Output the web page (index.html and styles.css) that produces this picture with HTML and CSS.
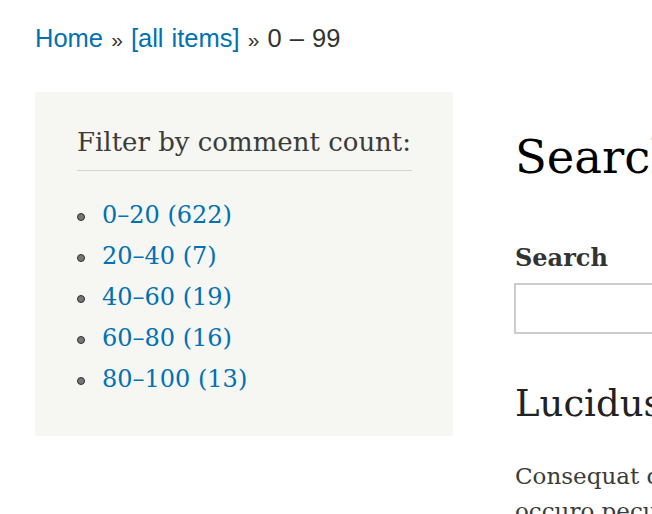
FILE: index.html
```html
<!DOCTYPE html>
<html lang="en">
<head>
<meta charset="utf-8">
<title>Search</title>
<link rel="stylesheet" href="styles.css">
</head>
<body>
<div class="page">
  <nav class="breadcrumb">
    <a href="#">Home</a> <span class="sep">»</span> <a href="#">[all items]</a> <span class="sep">»</span> 0 – 99
  </nav>
  <div class="layout">
    <aside class="sidebar">
      <h2 class="block-title">Filter by comment count:</h2>
      <ul class="facet-list">
        <li><a href="#">0–20 (622)</a></li>
        <li><a href="#">20–40 (7)</a></li>
        <li><a href="#">40–60 (19)</a></li>
        <li><a href="#">60–80 (16)</a></li>
        <li><a href="#">80–100 (13)</a></li>
      </ul>
    </aside>
    <main class="content">
      <h1 class="page-title">Search</h1>
      <form class="search-form">
        <label class="search-label" for="q">Search</label>
        <input class="search-input" id="q" type="text">
      </form>
      <h2 class="result-title">Lucidus Paratus Refoveo</h2>
      <p class="result-text">Consequat dolor luctus occuro pecus tamen vel virtus praesent ullamcorper.</p>
    </main>
  </div>
</div>
</body>
</html>
```

FILE: styles.css
```css
html, body {
  margin: 0;
  padding: 0;
  overflow: hidden;
  background: #ffffff;
}

.page {
  padding-left: 35px;
  width: 1000px;
}

.breadcrumb {
  padding-top: 23px;
  font-family: "Liberation Sans", Arial, sans-serif;
  font-size: 25.5px;
  line-height: 30px;
  word-spacing: 1px;
  color: #333333;
  white-space: nowrap;
}

.breadcrumb a {
  color: #0071b3;
  text-decoration: none;
}

.breadcrumb .sep {
  font-size: 21px;
}

.layout {
  display: flex;
  align-items: flex-start;
  gap: 62px;
  margin-top: 37px;
}

.sidebar {
  width: 418px;
  flex: none;
  box-sizing: border-box;
  background: #f6f6f2;
  padding: 35px 41px 36px 42px;
  font-family: "DejaVu Serif", Georgia, serif;
}

.block-title {
  margin: 0;
  font-size: 26px;
  font-weight: normal;
  line-height: 30px;
  color: #3b3b3b;
  padding-bottom: 13px;
  border-bottom: 1px solid #d3d3d0;
  white-space: nowrap;
}

.facet-list {
  list-style: none;
  margin: 24px 0 0 0;
  padding: 0;
}

.facet-list li {
  display: flex;
  align-items: center;
  font-size: 24px;
  line-height: 41px;
}

.facet-list li::before {
  content: "";
  width: 6px;
  height: 6px;
  border: 1px solid #2e2e2e;
  border-radius: 50%;
  background: #777777;
  margin-right: 17px;
  margin-top: 3px;
  flex: none;
}

.facet-list a {
  color: #0071b3;
  text-decoration: none;
}

.content {
  width: 520px;
  flex: none;
  font-family: "DejaVu Serif", Georgia, serif;
}

.page-title {
  margin: 35px 0 0 0;
  font-size: 46.5px;
  font-weight: normal;
  line-height: 60px;
  color: #000000;
  white-space: nowrap;
}

.search-form {
  display: flex;
  flex-direction: column;
  margin-top: 56px;
}

.search-label {
  font-size: 24px;
  font-weight: bold;
  line-height: 30px;
  color: #333333;
}

.search-input {
  margin-top: 10px;
  margin-left: -1px;
  height: 51px;
  width: 400px;
  box-sizing: border-box;
  border: 2px solid #cccccc;
  background: #ffffff;
  padding: 0 8px;
  font-size: 20px;
}

.result-title {
  margin: 46px 0 0 0;
  font-size: 37px;
  font-weight: normal;
  line-height: 48px;
  color: #222222;
  white-space: nowrap;
}

.result-text {
  margin: 31px 0 0 0;
  width: 330px;
  font-size: 23px;
  line-height: 35px;
  color: #3b3b3b;
}
```
